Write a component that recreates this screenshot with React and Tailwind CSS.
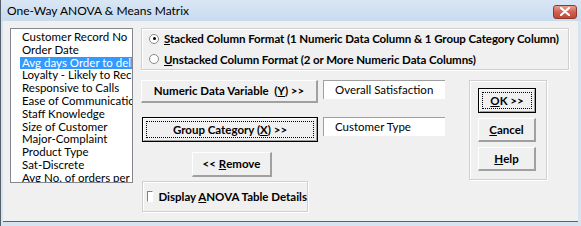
import React from 'react';

const items = [
  'Customer Record No',
  'Order Date',
  'Avg days Order to delivery',
  'Loyalty - Likely to Recommend',
  'Responsive to Calls',
  'Ease of Communications',
  'Staff Knowledge',
  'Size of Customer',
  'Major-Complaint',
  'Product Type',
  'Sat-Discrete',
  'Avg No. of orders per month',
];

// raised 3D button like a VBA userform command button
function Btn({ children, className = '', focused = false }) {
  if (focused) {
    return (
      <div className={`border border-black bg-[#f0f0f0] ${className}`}>
        <div className="h-full w-full border-t border-l border-t-white border-l-white border-b border-r border-b-[#a0a0a0] border-r-[#a0a0a0] p-[2px]">
          <div className="flex h-full w-full items-center justify-center border border-dotted border-black font-bold">
            {children}
          </div>
        </div>
      </div>
    );
  }
  return (
    <div
      className={`flex items-center justify-center bg-[#f0f0f0] border-t border-l border-t-white border-l-white border-b-2 border-r-2 border-b-[#a0a0a0] border-r-[#a0a0a0] font-bold ${className}`}
    >
      {children}
    </div>
  );
}

function Frame({ children, className = '' }) {
  return (
    <div className={`border border-[#d0d0d0] shadow-[inset_1px_1px_0_#ffffff,1px_1px_0_#ffffff] ${className}`}>
      {children}
    </div>
  );
}

function TextBox({ value }) {
  return (
    <div className="ml-[5px] flex h-[19px] w-[122px] items-center bg-white border-t border-l border-t-[#a0a0a0] border-l-[#a0a0a0] pl-[11px] text-[11.5px]">
      {value}
    </div>
  );
}

export default function App() {
  return (
    <div
      className="relative h-[226px] w-[581px] overflow-hidden bg-[#d6e4f2] border-l border-l-[#55606b]"
      style={{ fontFamily: 'Lato, "Noto Sans", sans-serif' }}
    >
      {/* title bar */}
      <div className="flex h-[21px] items-center justify-between bg-gradient-to-b from-[#d9e6f4] to-[#c8dbef] pl-[6px] pr-[4px]">
        <span className="text-[12px] text-black">One-Way ANOVA &amp; Means Matrix</span>
        <div className="mt-[2px] flex h-[14px] w-[24px] items-center justify-center rounded-[3px] border border-[#8a3a30] bg-gradient-to-b from-[#e8a090] via-[#d06050] to-[#c04838]">
          <svg width="10" height="9" viewBox="0 0 10 9">
            <path d="M1 1 L9 8 M9 1 L1 8" stroke="white" strokeWidth="2.2" strokeLinecap="round" />
          </svg>
        </div>
      </div>

      {/* body */}
      <div className="ml-[2px] mr-[3px] flex h-[201px] bg-[#f0f0f0] text-[11.5px] text-black border-b border-b-[#3d6e7a]">
        {/* list box */}
        <div className="ml-[7px] mt-[7px] h-[155px] w-[123px] overflow-hidden bg-white border border-[#828790] pt-[2px]">
          {items.map((it, i) => (
            <div
              key={it}
              className={`ml-[9px] h-[12.8px] whitespace-nowrap pl-[2px] leading-[12.8px] ${i === 2 ? 'bg-[#3399ff] text-white' : ''}`}
            >
              {it}
            </div>
          ))}
        </div>

        {/* right side */}
        <div className="ml-[8px] mt-[7px] flex flex-col">
          <Frame className="flex h-[42px] w-[428px] flex-col justify-center gap-[3px] pl-[7px] font-bold">
            <div className="flex items-center whitespace-nowrap tracking-[-0.08px]">
              <span className="mr-[5px] flex h-[10px] w-[10px] items-center justify-center rounded-full border border-[#888] bg-white">
                <span className="h-[3px] w-[3px] rounded-full bg-black" />
              </span>
              <span>
                <u>S</u>tacked Column Format (1 Numeric Data Column &amp; 1 Group Category Column)
              </span>
            </div>
            <div className="flex items-center whitespace-nowrap tracking-[-0.08px]">
              <span className="mr-[5px] h-[10px] w-[10px] rounded-full border border-[#888] bg-white" />
              <span>
                <u>U</u>nstacked Column Format (2 or More Numeric Data Columns)
              </span>
            </div>
          </Frame>

          <div className="mt-[10px] flex">
            <div className="flex w-[304px] flex-col">
              <div className="flex">
                <Btn className="h-[23px] w-[177px]">
                  Numeric Data Variable&nbsp;&nbsp;(<u>Y</u>) &gt;&gt;
                </Btn>
                <TextBox value="Overall Satisfaction" />
              </div>
              <div className="mt-[14px] flex">
                <Btn focused className="ml-[1px] h-[25px] w-[176px]">
                  Group Category (<u>X</u>) &gt;&gt;
                </Btn>
                <TextBox value="Customer Type" />
              </div>
              <Btn className="ml-[51px] mt-[10px] h-[25px] w-[80px]">
                &lt;&lt;&nbsp;<u>R</u>emove
              </Btn>
              <Frame className="ml-[1px] mt-[4px] flex h-[31px] w-[166px] items-center whitespace-nowrap pl-[4px] font-bold">
                <span className="mr-[5px] h-[11px] w-[11px] border border-t-[#808080] border-l-[#808080] border-b-white border-r-white bg-white" />
                <span>
                  Display <u>A</u>NOVA Table Details
                </span>
              </Frame>
            </div>

            <Frame className="ml-[24px] flex h-[100px] w-[78px] flex-col gap-[5px] pl-[8px] pt-[7px]">
              <Btn focused className="h-[25px] w-[58px]">
                <u>O</u>K &gt;&gt;
              </Btn>
              <Btn className="h-[24px] w-[58px]">
                <u>C</u>ancel
              </Btn>
              <Btn className="h-[24px] w-[58px]">
                <u>H</u>elp
              </Btn>
            </Frame>
          </div>
        </div>
      </div>
    </div>
  );
}
